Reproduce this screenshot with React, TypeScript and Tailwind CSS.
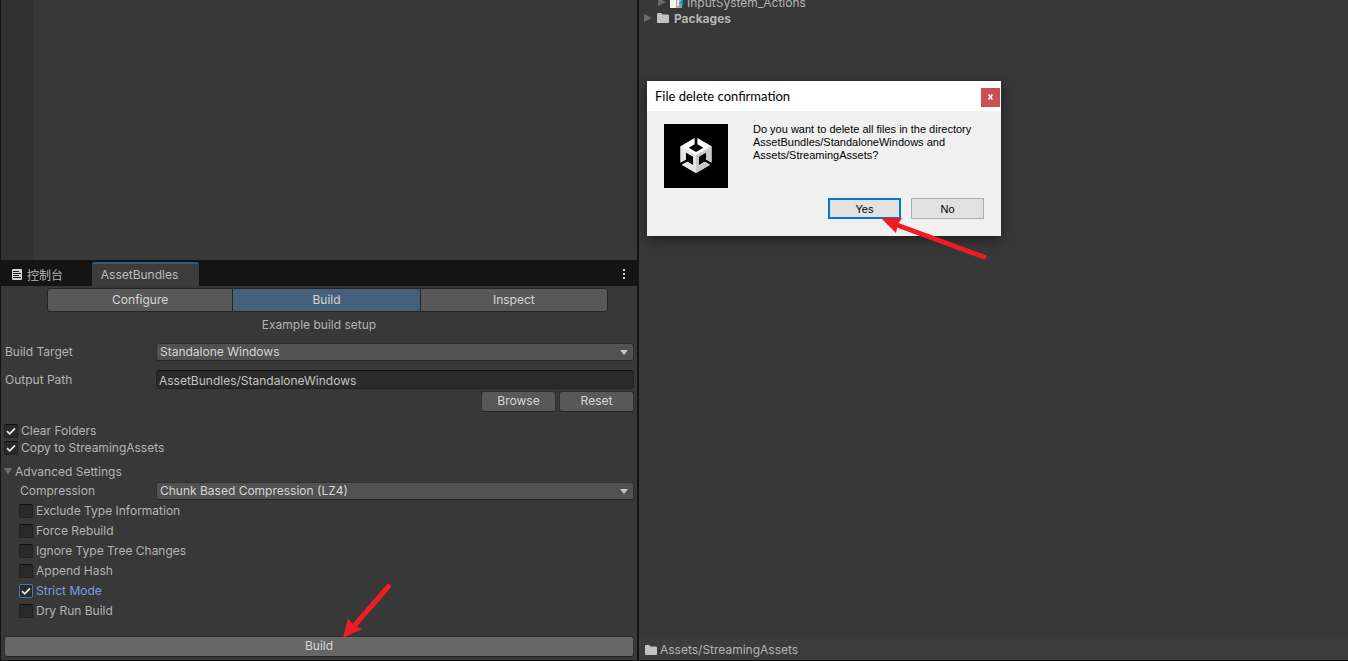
import { useState } from 'react';
import type { ReactNode } from 'react';

const TABS = ['Configure', 'Build', 'Inspect'];

const ADVANCED_OPTIONS = [
  { label: 'Exclude Type Information', on: false },
  { label: 'Force Rebuild', on: false },
  { label: 'Ignore Type Tree Changes', on: false },
  { label: 'Append Hash', on: false },
  { label: 'Strict Mode', on: true, focused: true },
  { label: 'Dry Run Build', on: false },
];

function FolderIcon() {
  return (
    <svg width="12" height="10" viewBox="0 0 12 10" fill="#c2c2c2" className="shrink-0">
      <path d="M0 1a1 1 0 0 1 1-1h3.2l1.3 1.5H11a1 1 0 0 1 1 1V9a1 1 0 0 1-1 1H1a1 1 0 0 1-1-1z" />
    </svg>
  );
}

function Foldout({ open = false }: { open?: boolean }) {
  return (
    <svg width="8" height="8" viewBox="0 0 8 8" fill="#6b6b6b" className="shrink-0">
      {open ? <path d="M0 1h8L4 8z" /> : <path d="M0 0v8l8-4z" />}
    </svg>
  );
}

function ActionsAssetIcon() {
  return (
    <svg width="15" height="14" viewBox="0 0 15 14" className="shrink-0">
      <path d="M1 0h12v13H1z" fill="#a9a9a9" />
      <path d="M1 0h6v13H1z" fill="#f4f4f4" />
      <path d="M8 0h2v11H8z" fill="#e4e4e4" />
      <path d="m13 3-3 6h2l-1 4 4-5h-2l2-5z" fill="#12a5e0" />
    </svg>
  );
}

function UnityLogo() {
  return (
    <svg width="64" height="64" viewBox="0 0 64 64" className="shrink-0 bg-black">
      <defs>
        <clipPath id="cube">
          <path d="m12.929 4.294 3.8 2.193c.136.077.141.29 0 .367l-4.515 2.608a.42.42 0 0 1-.425 0L7.274 6.854c-.139-.074-.141-.293 0-.367l3.797-2.193V0L1.376 5.598v11.195l3.718-2.146v-4.385c-.003-.157.181-.268.318-.184l4.515 2.607a.425.425 0 0 1 .213.368v5.213c.003.156-.181.268-.318.184l-3.8-2.193-3.717 2.145L12 24l9.695-5.598-3.717-2.145-3.8 2.193c-.134.082-.323-.025-.318-.184v-5.213c0-.157.087-.296.214-.368l4.515-2.607c.134-.082.322.022.318.184v4.385l3.717 2.146V5.598L12.929 0Z" />
        </clipPath>
      </defs>
      <g transform="translate(14.5 14) scale(1.46)">
        <g clipPath="url(#cube)">
          <path d="M0 0h24v24H0z" fill="#fff" />
          <path d="M1 5.400 12 11.700V24H1z" fill="#e4e4e4" />
          <path d="M23 5.400 12 11.700V24h11z" fill="#c8c8c8" />
        </g>
      </g>
    </svg>
  );
}

interface CheckProps {
  label: string;
  defaultOn: boolean;
  focused?: boolean;
}

function Check({ label, defaultOn, focused }: CheckProps) {
  const [on, setOn] = useState(defaultOn);
  return (
    <label className={`flex items-center gap-[3px] ${focused ? 'text-[#7a9fe0]' : ''}`}>
      <span className="relative flex">
        <input
          type="checkbox"
          checked={on}
          onChange={() => setOn(!on)}
          className={`size-[14px] appearance-none rounded-[2px] border bg-[#2a2a2a] ${
            focused ? 'border-[#3a79bb]' : 'border-[#212121] border-t-[#0d0d0d]'
          }`}
        />
        {on && (
          <svg viewBox="0 0 14 14" className="pointer-events-none absolute inset-0 size-[14px]">
            <path d="m3 7.200 2.700 2.600L11 4.300" fill="none" stroke="#e8e8e8" strokeWidth="1.7" />
          </svg>
        )}
      </span>
      {label}
    </label>
  );
}

function Dropdown({ id, value }: { id: string; value: string }) {
  return (
    <div className="relative flex flex-1">
      <select
        id={id}
        className="h-[18px] w-full appearance-none rounded-[3px] border border-[#303030] border-b-[#242424] bg-[#515151] pl-[3px] leading-4 text-[#d6d6d6]"
      >
        <option>{value}</option>
      </select>
      <svg viewBox="0 0 8 5" className="pointer-events-none absolute top-[7px] right-[6px] h-[5px] w-2" fill="#c8c8c8">
        <path d="M0 0h8L4 5z" />
      </svg>
    </div>
  );
}

function EditorButton({ className, children }: { className: string; children: ReactNode }) {
  return (
    <button
      className={`h-[21px] rounded-[3px] border border-[#303030] border-b-[#242424] pb-[2px] leading-4 text-[#d6d6d6] ${className}`}
    >
      {children}
    </button>
  );
}

// Marker arrow whose tip sits on the control it points at
function BuildArrow() {
  return (
    <svg width="50" height="58" viewBox="0 0 50 58" className="pointer-events-none absolute bottom-[19px] left-1/2 ml-6">
      <path d="M45.500 6.500 11 46" stroke="#ee1c23" strokeWidth="5" strokeLinecap="round" />
      <path d="M0 58 5 38l5 7 9 4z" fill="#ee1c23" />
    </svg>
  );
}

function BundlePanel() {
  const [tab, setTab] = useState('Build');
  return (
    <section className="flex flex-col">
      <header className="flex h-[26px] items-end bg-[#141414] pr-2">
        <button className="flex h-6 items-center gap-[5px] pr-[29px] pl-[11px] text-[#b4b4b4]">
          <svg width="10" height="11" viewBox="0 0 10 11" className="shrink-0">
            <rect width="10" height="11" rx="1" fill="#d4d4d4" />
            <path d="M1 2.500h6M1 4.500h8M1 6.500h6M1 8.500h8" stroke="#1e1e1e" />
          </svg>
          <span className="pt-[3px]">控制台</span>
        </button>
        <button className="h-6 w-[107px] rounded-t-[3px] border-t-2 border-[#2c5d87] bg-[#3c3c3c] pr-3 text-[#bdbdbd]">
          AssetBundles
        </button>
        <button aria-label="Panel menu" className="ml-auto flex h-6 w-[10px] items-center justify-center">
          <svg width="2" height="10" viewBox="0 0 2 10" fill="#d0d0d0">
            <path d="M0 0h2v2H0zM0 4h2v2H0zM0 8h2v2H0z" />
          </svg>
        </button>
      </header>

      <div className="flex flex-col px-[3px] pb-[3px]">
        <div className="mt-[2px] mr-[26px] ml-[43px] grid grid-cols-[185fr_187fr_187fr] gap-px overflow-hidden rounded-[3px] border border-[#242424] bg-[#242424]">
          {TABS.map((name) => (
            <button
              key={name}
              onClick={() => setTab(name)}
              className={`h-[22px] text-[#d6d6d6] ${tab === name ? 'bg-[#46607c]' : 'bg-[#585858]'}`}
            >
              {name}
            </button>
          ))}
        </div>
        <p className="h-[25px] text-center leading-[25px]">Example build setup</p>

        <div className="mt-[6px] flex items-center">
          <label htmlFor="target" className="w-[152px] pl-px">Build Target</label>
          <Dropdown id="target" value="Standalone Windows" />
        </div>
        <div className="mt-[9px] flex items-center">
          <label htmlFor="path" className="w-[152px] pl-px">Output Path</label>
          <input
            id="path"
            defaultValue="AssetBundles/StandaloneWindows"
            className="h-[19px] min-w-0 flex-1 rounded-[3px] border border-[#212121] border-t-[#0d0d0d] bg-[#2a2a2a] pt-px pl-[2px] text-[#c4c4c4]"
          />
        </div>
        <div className="mt-[2px] flex justify-end gap-[3px]">
          <EditorButton className="w-[75px] bg-[#585858]">Browse</EditorButton>
          <EditorButton className="w-[75px] bg-[#585858]">Reset</EditorButton>
        </div>

        <div className="mt-[10px] grid auto-rows-[17px]">
          <Check label="Clear Folders" defaultOn />
          <Check label="Copy to StreamingAssets" defaultOn />
        </div>

        <button className="mt-[6px] flex h-[18px] items-center gap-[3px] text-left leading-[17px]">
          <Foldout open />
          Advanced Settings
        </button>
        <div className="mt-[2px] flex items-center">
          <label htmlFor="compression" className="w-[152px] pl-4">Compression</label>
          <Dropdown id="compression" value="Chunk Based Compression (LZ4)" />
        </div>
        <div className="mt-px grid auto-rows-[20px] pl-[15px]">
          {ADVANCED_OPTIONS.map((o) => (
            <Check key={o.label} label={o.label} defaultOn={o.on} focused={o.focused} />
          ))}
        </div>

        <div className="relative mt-[15px] flex">
          <EditorButton className="flex-1 bg-[#676767]">Build</EditorButton>
          <BuildArrow />
        </div>
      </div>
    </section>
  );
}

function DeleteDialog() {
  return (
    <div
      role="dialog"
      aria-labelledby="dialog-title"
      className="absolute top-[81px] left-2 w-[354px] bg-[#f0f0f0] text-black shadow-[0_3px_12px_rgba(0,0,0,0.5)]"
    >
      <div className="flex h-[30px] items-center justify-between bg-white pr-px pl-2">
        <h2 id="dialog-title" className="font-['Lato',sans-serif] text-[13px]">File delete confirmation</h2>
        <button
          aria-label="Close"
          className="mt-[2px] flex h-[19px] w-[19px] items-center justify-center bg-[#c75050]"
        >
          <svg width="5" height="6" viewBox="0 0 5 6" stroke="#fff" strokeWidth="1.5">
            <path d="M.5.5l4 5M4.500.5l-4 5" />
          </svg>
        </button>
      </div>
      <div className="flex gap-[25px] pt-[13px] pl-[17px]">
        <UnityLogo />
        <p className="-mt-px font-['Liberation_Sans',sans-serif] text-[11px] leading-[13px]">
          Do you want to delete all files in the directory
          <br />
          AssetBundles/StandaloneWindows and
          <br />
          Assets/StreamingAssets?
        </p>
      </div>
      <div className="flex justify-end gap-[10px] pt-[10px] pr-[17px] pb-[17px] font-['Liberation_Sans',sans-serif] text-[11px]">
        <button className="h-[21px] w-[73px] border-2 border-[#0078d7] bg-[#e1e1e1] leading-4">Yes</button>
        <button className="h-[21px] w-[73px] border border-[#adadad] bg-[#e1e1e1] leading-4">No</button>
      </div>
      <svg width="108" height="44" viewBox="0 0 108 44" className="pointer-events-none absolute top-[136px] left-[234px]">
        <path d="M103 40 16 8" stroke="#ee1c23" strokeWidth="5" strokeLinecap="round" />
        <path d="m0 1 21 0-4 6-2 9z" fill="#ee1c23" />
      </svg>
    </div>
  );
}

export default function App() {
  return (
    <main className="grid min-h-screen grid-cols-[639fr_709fr] border-b border-[#141414] bg-[#383838] font-['Inter','Noto_Sans_CJK_SC',sans-serif] text-[12px] leading-4 text-[#b4b4b4]">
      <div className="flex flex-col border-r-2 border-l border-[#141414]">
        <div className="flex-1 border-l-[32px] border-[#313131]" />
        <BundlePanel />
      </div>

      <div className="relative flex flex-col">
        <div className="flex h-[26px] flex-col justify-end overflow-hidden leading-[17px]">
          <div className="flex h-4 shrink-0 items-center gap-[3px] pl-[19px]">
            <Foldout />
            <ActionsAssetIcon />
            InputSystem_Actions
          </div>
          <div className="flex h-4 shrink-0 items-center gap-[5px] pl-[5px] font-bold">
            <Foldout />
            <FolderIcon />
            Packages
          </div>
        </div>
        <footer className="mt-auto flex h-[21px] items-center gap-[3px] bg-[#3c3c3c] pl-[6px]">
          <FolderIcon />
          Assets/StreamingAssets
        </footer>
        <DeleteDialog />
      </div>
    </main>
  );
}
